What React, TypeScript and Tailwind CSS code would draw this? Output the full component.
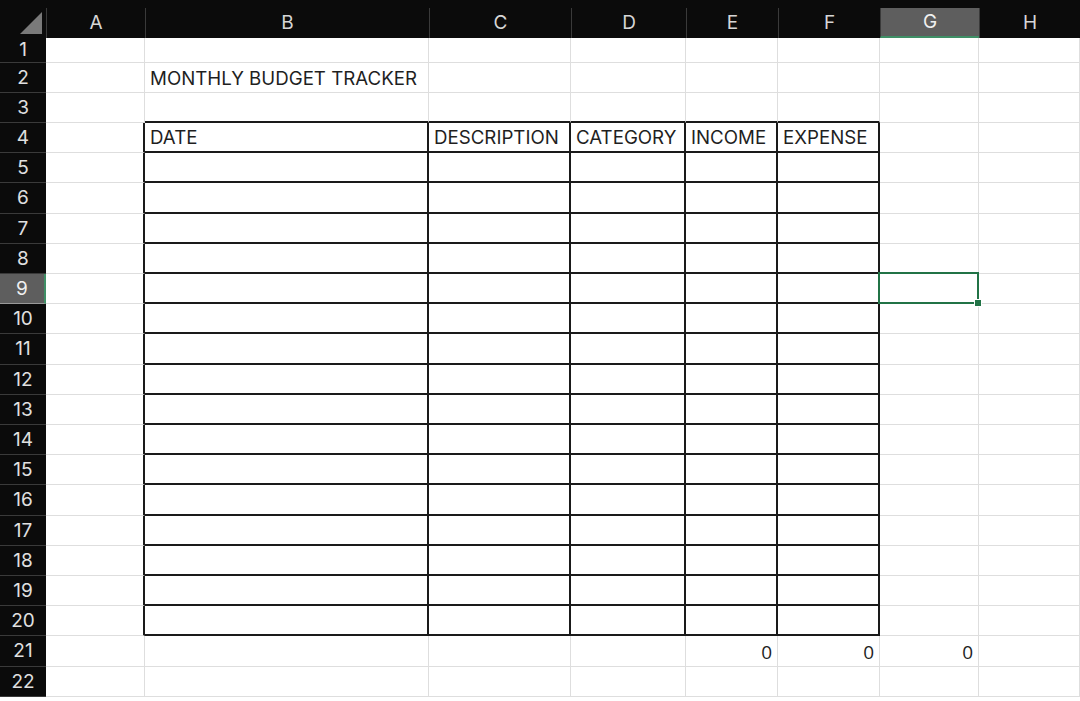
import React from 'react'

const cols = ['A', 'B', 'C', 'D', 'E', 'F', 'G', 'H']
const rows = Array.from({ length: 22 }, (_, i) => i + 1)
const heads = ['DATE', 'DESCRIPTION', 'CATEGORY', 'INCOME', 'EXPENSE']

function rowHeight(r: number) {
  if (r === 1) return 'h-[25px]'
  return r % 5 === 1 ? 'h-[31px]' : 'h-[30px]'
}

function Cell({ r, c }: { r: number; c: number }) {
  // c: 0..7 => A..H
  const inTable = r >= 4 && r <= 20 && c >= 1 && c <= 5
  let right = 'border-r border-r-[#dedede]'
  let bottom = 'border-b border-b-[#dedede]'
  if (inTable) {
    right = 'border-r-2 border-r-[#1a1a1a]'
    bottom = 'border-b-2 border-b-[#1a1a1a]'
  }
  if (c === 0 && r >= 4 && r <= 20) right = 'border-r-2 border-r-[#1a1a1a]'
  if (r === 3 && c >= 1 && c <= 5) bottom = 'border-b-2 border-b-[#1a1a1a]'

  let content: React.ReactNode = null
  let align = 'justify-start pl-[5px] pt-[2px]'
  if (r === 2 && c === 1) content = 'MONTHLY BUDGET TRACKER'
  if (r === 4 && c >= 1 && c <= 5) content = heads[c - 1]
  if (r === 21 && c >= 4 && c <= 6) {
    content = <span className="font-['Open_Sans',sans-serif] text-[19px]">0</span>
    align = 'justify-end pr-[5px] pt-[2px]'
  }

  return (
    <div className={`relative min-h-0 overflow-visible flex items-center whitespace-nowrap text-[18.7px] leading-[20px] text-[#1f1f1f] ${align} ${right} ${bottom}`}>
      {content}
      {r === 9 && c === 6 && (
        <div className="absolute z-10 -left-[2px] -top-[2px] -right-[1px] -bottom-[1px] border-2 border-[#217346] pointer-events-none">
          <div className="absolute -right-[5px] -bottom-[5px] w-[8px] h-[8px] bg-[#217346] border border-white" />
        </div>
      )}
    </div>
  )
}

export default function App() {
  return (
    <div className="w-[1080px] h-[701px] overflow-hidden bg-white font-['Inter',sans-serif]">
      <div className="grid grid-cols-[46px_99px_284px_142px_115px_92px_102px_99px_1fr]">
        {/* column header row */}
        <div className="h-[38px] bg-[#0b0b0b] relative">
          <svg width="46" height="38" className="absolute inset-0">
            <polygon points="42,12 42,34 20,34" fill="#7a7a7a" />
          </svg>
        </div>
        {cols.map(c => (
          <div key={c} className="h-[38px] bg-[#0b0b0b] pt-[8px]">
            <div
              className={
                c === 'G'
                  ? 'h-full flex items-center justify-center bg-[#5e5e5e] border-b-2 border-b-[#3f8f66] text-[19px] text-[#f0f0f0] border-l border-l-[#3a3a3a]'
                  : 'h-full flex items-center justify-center text-[19px] text-[#d6d6d6] border-l border-l-[#3a3a3a]'
              }
            >
              {c}
            </div>
          </div>
        ))}

        {rows.map(r => (
          <React.Fragment key={r}>
            <div
              className={
                r === 9
                  ? `${rowHeight(r)} flex items-center justify-center leading-[20px] bg-[#5e5e5e] border-r-2 border-r-[#3f8f66] border-b border-b-[#9a9a9a] text-[19px] text-[#f0f0f0]`
                  : `${rowHeight(r)} flex items-center justify-center leading-[20px] bg-[#0b0b0b] border-b border-b-[#3a3a3a] text-[19px] text-[#e0e0e0]`
              }
            >
              {r}
            </div>
            {cols.map((_, c) => (
              <Cell key={c} r={r} c={c} />
            ))}
          </React.Fragment>
        ))}
      </div>
    </div>
  )
}
